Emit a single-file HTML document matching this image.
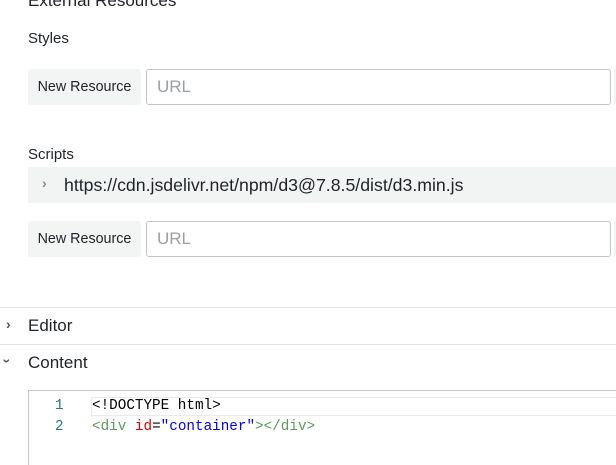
<!DOCTYPE html>
<html><head><style>
body{margin:0;width:616px;height:465px;overflow:hidden;background:#fff;font-family:"Liberation Sans",sans-serif;color:#1f2328;position:relative}
.a{position:absolute}
.lbl{font-size:15px}
.btn{background:#f3f4f4;border-radius:3px;font-size:14.3px;display:flex;align-items:center;justify-content:center}
.inp{border:1px solid #c4c4c4;border-radius:3px;box-sizing:border-box;font-size:17px;color:#9aa0a4;padding-left:10px;display:flex;align-items:center}
.hr{height:1px;background:#e2e2e2;left:0;width:616px}
.code{font-family:"Liberation Mono",monospace;font-size:14.3px}
.chev{font-size:14px;font-weight:bold;color:#555}
</style></head><body>
<div class="a" style="left:28px;top:-9px;font-size:17px">External Resources</div>
<div class="a lbl" style="left:28px;top:30px">Styles</div>
<div class="a btn" style="left:28px;top:69px;width:113px;height:36px">New Resource</div>
<div class="a inp" style="left:146px;top:69px;width:465px;height:36px">URL</div>
<div class="a" style="left:614px;top:69px;width:2px;height:36px;background:#f3f4f4"></div>
<div class="a lbl" style="left:28px;top:146px">Scripts</div>
<div class="a" style="left:28px;top:167px;width:588px;height:36px;background:#f2f4f4"></div>
<div class="a chev" style="left:42px;top:175px;color:#888">›</div>
<div class="a" style="left:64px;top:175px;font-size:17.7px">https://cdn.jsdelivr.net/npm/d3@7.8.5/dist/d3.min.js</div>
<div class="a btn" style="left:28px;top:221px;width:113px;height:36px">New Resource</div>
<div class="a inp" style="left:146px;top:221px;width:465px;height:36px">URL</div>
<div class="a" style="left:614px;top:221px;width:2px;height:36px;background:#f3f4f4"></div>
<div class="a hr" style="top:307px"></div>
<div class="a chev" style="left:6px;top:316px">›</div>
<div class="a" style="left:28px;top:316px;font-size:17px">Editor</div>
<div class="a hr" style="top:344px"></div>
<div class="a chev" style="left:5px;top:353px;transform:rotate(90deg)">›</div>
<div class="a" style="left:28px;top:353px;font-size:17px">Content</div>
<div class="a" style="left:28px;top:390px;width:588px;height:75px;border-top:1px solid #c8c8c8;border-left:1px solid #c8c8c8;box-sizing:border-box"></div>
<div class="a" style="left:91px;top:397px;width:525px;height:19px;border:1px solid #eaeaea;box-sizing:border-box;border-right:none"></div>
<div class="a code" style="left:55px;top:398px;color:#237893">1</div>
<div class="a code" style="left:55px;top:419px;color:#237893">2</div>
<div class="a code" style="left:92px;top:398px;color:#000">&lt;!DOCTYPE html&gt;</div>
<div class="a code" style="left:92px;top:419px"><span style="color:#5a9c58">&lt;div </span><span style="color:#e50000">id</span><span style="color:#000">=</span><span style="color:#0000ff">"container"</span><span style="color:#5a9c58">&gt;&lt;/div&gt;</span></div>
</body></html>
